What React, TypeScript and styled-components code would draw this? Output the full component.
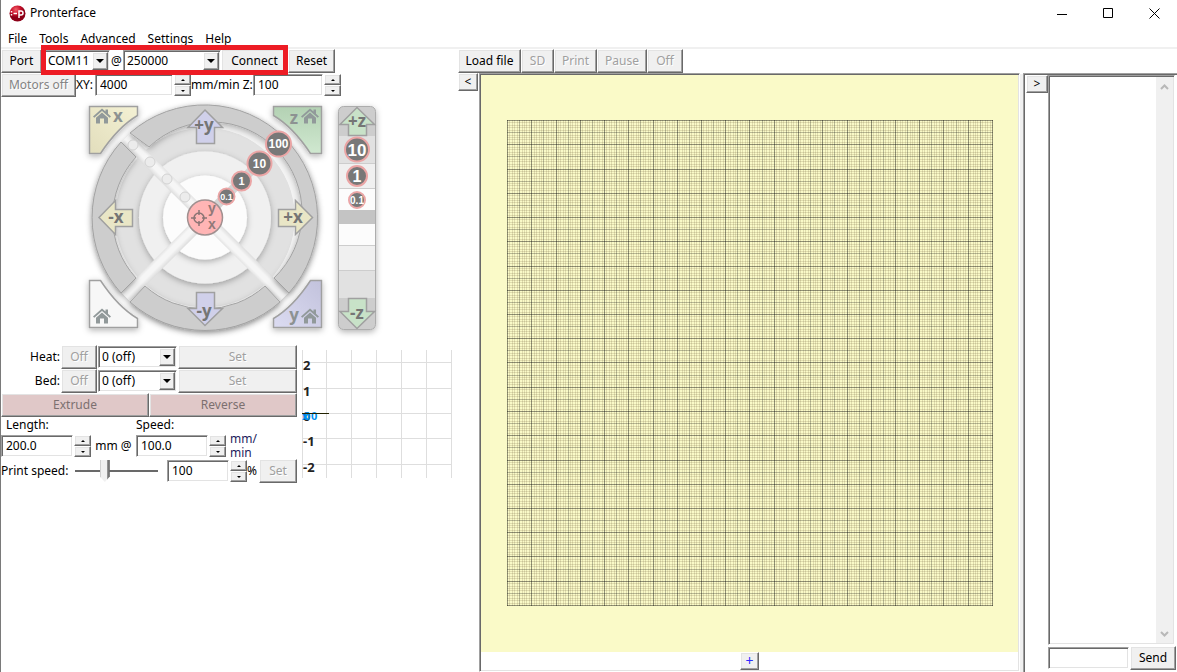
import React from "react";
import styled, { createGlobalStyle, css } from "styled-components";

const Global = createGlobalStyle`
  * { box-sizing: border-box; }
  body { margin: 0; background: #fff; }
  body, button, input, select, textarea {
    font: 12px/16px "Noto Sans", "Open Sans", sans-serif;
    color: #000;
  }
`;

const raised = css`
  background: #f0f0f0;
  border: 1px solid;
  border-color: #fff #696969 #696969 #fff;
  box-shadow: inset -1px -1px #a0a0a0, inset 1px 1px #e3e3e3;
`;

const sunken = css`
  background: #fff;
  border: 1px solid;
  border-color: #a0a0a0 #fff #fff #a0a0a0;
  box-shadow: inset 1px 1px #696969, inset -1px -1px #e3e3e3;
`;

const Window = styled.div`
  display: flex;
  flex-direction: column;
  min-height: 100vh;
  border-left: 1px solid #7a7a7a;
`;

const TitleBar = styled.header`
  display: flex;
  align-items: center;
  height: 26px;
  padding-left: 8px;
`;

const Title = styled.h1`
  flex: 1;
  margin: 0 0 0 4px;
  font-size: 12px;
  font-weight: 400;
`;

const WindowButton = styled.button`
  display: grid;
  place-items: center;
  width: 46px;
  height: 26px;
  padding: 0;
  border: 0;
  background: none;
`;

const MenuBar = styled.nav`
  display: flex;
  align-items: center;
  gap: 12px;
  height: 23px;
  padding: 4px 0 0 7px;
  border-bottom: 2px solid #f0f0f0;
`;

const MenuLink = styled.a`
  color: #000;
  text-decoration: none;
`;

const Body = styled.main`
  flex: 1;
  display: flex;
`;

const Controls = styled.section`
  flex: 0 0 457px;
`;

const Row = styled.div<{ $h: number; $gap?: number }>`
  display: flex;
  align-items: center;
  height: ${(p) => p.$h}px;
  gap: ${(p) => p.$gap ?? 0}px;
`;

const PushButton = styled.button<{ $w: number; $h?: number; $pink?: boolean }>`
  ${raised}
  flex: none;
  width: ${(p) => p.$w}px;
  height: ${(p) => p.$h ?? 24}px;
  padding: 0;
  white-space: nowrap;
  ${(p) => p.$pink && "background: #e0c8c8;"}
  &:disabled {
    color: ${(p) => (p.$pink ? "#7c7070" : "#a0a0a0")};
    text-shadow: ${(p) => (p.$pink ? "none" : "1px 1px #fff")};
  }
`;

const MotorsButton = styled(PushButton)`
  &:disabled { color: #838383; }
`;

const Highlight = styled.div`
  position: relative;
  display: flex;
  align-items: center;
  height: 24px;
  padding-left: 2px;
  &::after {
    content: "";
    position: absolute;
    inset: -4px 0 -2px -1px;
    border: 5px solid #ed1c24;
    pointer-events: none;
  }
`;

const ComboBox = styled.div<{ $w: number }>`
  ${sunken}
  display: grid;
  grid-template-columns: 1fr 16px;
  flex: none;
  width: ${(p) => p.$w}px;
  height: 22px;
  padding: 1px;
`;

const ComboSelect = styled.select`
  grid-area: 1 / 1 / 2 / 3;
  appearance: none;
  min-width: 0;
  padding: 0 0 1px 2px;
  border: 0;
  background: none;
`;

const ComboArrow = styled.span`
  ${raised}
  grid-area: 1 / 2;
  display: grid;
  place-items: center;
  pointer-events: none;
`;

const Field = styled.input<{ $w: number }>`
  ${sunken}
  flex: none;
  width: ${(p) => p.$w}px;
  height: 22px;
  padding: 0 4px 1px;
`;

const SpinBox = styled.div`
  display: flex;
  align-items: center;
  gap: 1px;
`;

const SpinButtons = styled.div`
  display: grid;
  width: 17px;
`;

const SpinButton = styled.button`
  ${raised}
  display: grid;
  place-items: center;
  height: 11px;
  padding: 0;
`;

const AxisLabel = styled.label<{ $w: number }>`
  width: ${(p) => p.$w}px;
  white-space: nowrap;
`;

const HeaterLabel = styled.label`
  width: 59px;
  text-align: right;
`;

const Unit = styled.span<{ $w: number; $center?: boolean }>`
  width: ${(p) => p.$w}px;
  white-space: nowrap;
  text-align: ${(p) => (p.$center ? "center" : "left")};
`;

const SpeedUnit = styled.span`
  width: 40px;
  padding-left: 4px;
  line-height: 14px;
  color: #1c1c5c;
`;

const Lower = styled.div`
  display: flex;
  gap: 5px;
`;

const HeaterPane = styled.div`
  width: 296px;
`;

const ExtrudeLabels = styled.div`
  display: grid;
  grid-template-columns: 130px 1fr;
  height: 16px;
  padding-left: 5px;
`;

const Slider = styled.input`
  appearance: none;
  width: 83px;
  height: 22px;
  margin: 0 9px 0 0;
  background: linear-gradient(#696969, #696969) center / 100% 2px no-repeat;
  &::-webkit-slider-thumb {
    appearance: none;
    width: 10px;
    height: 22px;
    background: linear-gradient(90deg, #d0d0d0 1px, #f0f0f0 1px, #f0f0f0 7px, #a0a0a0 7px, #696969 9px);
    clip-path: polygon(0 0, 100% 0, 100% 75%, 50% 100%, 0 75%);
  }
`;

const Plot = styled.section`
  flex: 1;
  display: flex;
  flex-direction: column;
  min-width: 0;
`;

const Viewer = styled.div`
  flex: 1;
  display: flex;
  align-items: flex-start;
`;

const ViewPanel = styled.div`
  ${sunken}
  flex: 1;
  align-self: stretch;
  display: flex;
  flex-direction: column;
  align-items: center;
  margin-left: 1px;
  padding: 1px;
`;

const Bed = styled.div`
  flex: 1;
  align-self: stretch;
  display: flex;
  justify-content: center;
  align-items: flex-start;
  padding-top: 45px;
  background: #fafac8;
`;

const AddButton = styled(PushButton)`
  color: #2b2bff;
  font-size: 14px;
  line-height: 14px;
`;

const Splitter = styled.div`
  width: 3px;
  margin-top: 25px;
  background: #f0f0f0;
`;

const LogPanel = styled.aside`
  flex: 0 0 154px;
  min-width: 0;
  display: flex;
  align-items: flex-start;
  margin-top: 24px;
  padding: 1px 2px 2px;
  border: solid #a0a0a0;
  border-width: 1px 0 0 1px;
  box-shadow: inset 1px 1px #696969;
`;

const LogColumn = styled.div`
  flex: 1;
  align-self: stretch;
  display: flex;
  flex-direction: column;
  gap: 1px;
  min-width: 0;
`;

const LogBox = styled.div`
  ${sunken}
  flex: 1;
  display: flex;
  padding: 1px;
`;

const LogText = styled.textarea`
  flex: 1;
  min-width: 0;
  border: 0;
  resize: none;
`;

const ScrollTrack = styled.div`
  display: flex;
  flex-direction: column;
  justify-content: space-between;
  align-items: center;
  width: 17px;
  padding: 6px 0 5px;
  background: #f0f0f0;
`;

const Drawing = styled.svg`
  display: block;
  flex: none;
`;

function Combo({ label, value, w }: { label: string; value: string; w: number }) {
  return (
    <ComboBox $w={w}>
      <ComboSelect aria-label={label} defaultValue={value}>
        <option>{value}</option>
      </ComboSelect>
      <ComboArrow>
        <svg width="8" height="4"><path d="M0 0H8L4 4Z" fill="#000" /></svg>
      </ComboArrow>
    </ComboBox>
  );
}

function Spin({ id, value, w }: { id: string; value: string; w: number }) {
  return (
    <SpinBox>
      <Field id={id} $w={w} defaultValue={value} />
      <SpinButtons>
        <SpinButton aria-label="Increase">
          <svg width="4" height="2"><path d="M0 2H4L2 0Z" fill="#000" /></svg>
        </SpinButton>
        <SpinButton aria-label="Decrease">
          <svg width="4" height="2"><path d="M0 0H4L2 2Z" fill="#000" /></svg>
        </SpinButton>
      </SpinButtons>
    </SpinBox>
  );
}

function Badge({ x, y, r, size, text }: { x: number; y: number; r: number; size: number; text: string }) {
  return (
    <g>
      <circle cx={x} cy={y} r={r} fill="#787878" stroke="#eba5a5" strokeWidth="2" />
      <text x={x} y={y + size * 0.36} fontSize={size} textAnchor="middle" fill="#fff" fontFamily="Liberation Sans, sans-serif" fontWeight="700">{text}</text>
    </g>
  );
}

function House({ x, y }: { x: number; y: number }) {
  return (
    <g transform={`translate(${x} ${y})`} fill="#91999a">
      <path d="M0 8.5 9 0.5 12.5 3.5V1.500H15V5.800L18 8.500 16.700 9.800 9 3 1.300 9.800Z" />
      <path d="M3 9.800 9 4.500 15 9.800V15.500H11V10.500H7V15.500H3Z" />
    </g>
  );
}

/* Outer ring pieces, cut where the NW, SW and SE channels pass. */
const RING_SEGMENTS = [
  "M130 133A113 113 0 0 1 289 293L274 278A90 90 0 0 0 149 147Z",
  "M121 142A113 113 0 0 0 121 293L136 278A90 90 0 0 1 136 157Z",
  "M130 302A113 113 0 0 0 280 302L265 286A90 90 0 0 1 145 286Z",
];

function JogPanel() {
  return (
    <Drawing width="457" height="248" viewBox="1 97 457 248" role="img" aria-label="Jog controls">
      <defs>
        <filter id="shadow" x="-20%" y="-20%" width="140%" height="150%">
          <feDropShadow dx="0" dy="2" stdDeviation="3" floodColor="#000" floodOpacity="0.3" />
        </filter>
        <linearGradient id="channel" gradientUnits="userSpaceOnUse" x1="0" y1="-7" x2="0" y2="7">
          <stop offset="0" stopColor="#d8d8d8" />
          <stop offset="0.4" stopColor="#f6f6f6" />
          <stop offset="0.7" stopColor="#f6f6f6" />
          <stop offset="1" stopColor="#dedede" />
        </linearGradient>
        <linearGradient id="yellow" x1="1" y1="0" x2="0" y2="1"><stop stopColor="#f4f1d4" /><stop offset="1" stopColor="#e2debc" /></linearGradient>
        <linearGradient id="green" x1="0" y1="0" x2="0" y2="1"><stop stopColor="#b3d1b3" /><stop offset="1" stopColor="#d0e8d0" /></linearGradient>
        <linearGradient id="blue" x1="0" y1="1" x2="1" y2="0"><stop stopColor="#dcdcf2" /><stop offset="1" stopColor="#c2c2dc" /></linearGradient>
        <clipPath id="disc"><circle cx="205" cy="217.500" r="90" /></clipPath>
      </defs>

      <circle cx="205" cy="217.500" r="112" fill="#f4f4f4" filter="url(#shadow)" />
      <g clipPath="url(#disc)">
        <circle cx="205" cy="217.500" r="90" fill="#e1e1e1" />
        <g filter="url(#shadow)"><circle cx="205" cy="217.500" r="66" fill="#f0f0f0" /></g>
        <g filter="url(#shadow)"><circle cx="205" cy="217.500" r="42" fill="#fcfcfc" /></g>
      </g>
      {[45, 135, 225].map((a) => (
        <rect key={a} x="14" y="-6" width="98" height="12" fill="url(#channel)" transform={`translate(205 217.500) rotate(${a})`} />
      ))}
      <path d="M215 207 274 148" stroke="#d4d4d4" strokeWidth="9" />
      <g filter="url(#shadow)">
        {RING_SEGMENTS.map((d) => <path key={d} d={d} fill="#cdcdcd" stroke="#a3a3a3" />)}
      </g>
      {[[133, 145], [150, 162], [167, 179], [185, 197]].map(([x, y]) => (
        <circle key={x} cx={x} cy={y} r="5" fill="#ececec" stroke="#d2d2d2" />
      ))}
      <path d="M267 156 272 151" stroke="#eee" strokeWidth="10" />

      <g stroke="#a0a0a0" strokeWidth="1.500" filter="url(#shadow)">
        <path d="M89.500 106.500H137.500V115.500Q118 127 100.500 153.500H89.500Z" fill="url(#yellow)" />
        <path d="M321.500 106.500H273.500V115.500Q293 127 310.500 153.500H321.500Z" fill="url(#green)" />
        <path d="M89.500 327.500H137.500V318.500Q118 307 100.500 280.500H89.500Z" fill="#f7f7f7" />
        <path d="M321.500 327.500H273.500V318.500Q293 307 310.500 280.500H321.500Z" fill="url(#blue)" />
      </g>
      <House x={93} y={108} />
      <House x={301} y={108} />
      <House x={93} y={308} />
      <House x={301} y={308} />

      <g stroke="#a0a0a0" strokeWidth="1.500">
        <path d="M205 110 222.500 127.500H214.500V143.500H196.500V127.500H188Z" fill="#d0d0ea" />
        <path d="M205 325.500 222.500 308.500H214.500V292.500H196.500V308.500H188Z" fill="#d0d0ea" />
        <path d="M99 217.500 115.500 200.500V209.500H132.500V226.500H115.500V234.500Z" fill="#e9e6c6" />
        <path d="M312.500 217.500 295.500 200.500V209.500H278.500V226.500H295.500V234.500Z" fill="#e9e6c6" />
      </g>

      <circle cx="205" cy="217.500" r="17.500" fill="#ffb5b5" stroke="#a09090" strokeWidth="1.500" />
      <g fill="none" stroke="#8a7474" strokeWidth="1.500">
        <circle cx="199" cy="218" r="5" />
        <path d="M199 210V215M199 221V226M191 218H196M202 218H207" />
      </g>

      <g filter="url(#shadow)">
        <rect x="338.500" y="106.500" width="37" height="223" rx="5" fill="#cdcdcd" stroke="#adadad" />
      </g>
      <g>
        <rect x="339" y="136" width="36" height="27" fill="#e1e1e1" />
        <rect x="339" y="164" width="36" height="24" fill="#f0f0f0" />
        <rect x="339" y="189" width="36" height="21" fill="#fcfcfc" />
        <rect x="339" y="210" width="36" height="14" fill="#c4c4c4" />
        <rect x="339" y="224" width="36" height="21" fill="#fcfcfc" />
        <rect x="339" y="246" width="36" height="24" fill="#f0f0f0" />
        <rect x="339" y="271" width="36" height="27" fill="#e1e1e1" />
      </g>
      <g fill="#c8e2c8" stroke="#a0a0a0" strokeWidth="1.500">
        <path d="M357 107.500 374.500 124.500H366.500V135.500H348.500V124.500H340Z" />
        <path d="M357 328.500 374.500 311.500H366.500V298.500H348.500V311.500H340Z" />
      </g>

      <g fontFamily="Open Sans, sans-serif" fontWeight="700" fontSize="17" fill="#757575" textAnchor="middle">
        <text x="204" y="131">+y</text>
        <text x="204" y="317">-y</text>
        <text x="116" y="223">-x</text>
        <text x="293" y="223">+x</text>
        <text x="357" y="127">+z</text>
        <text x="357" y="319">-z</text>
        <g fill="#8d9292">
          <text x="118" y="122">x</text>
          <text x="294" y="124">z</text>
          <text x="294" y="321">y</text>
        </g>
        <g fill="#917878" fontSize="14" fontFamily="Liberation Sans, sans-serif">
          <text x="212" y="213">y</text>
          <text x="212" y="229">x</text>
        </g>
      </g>

      <Badge x={278.5} y={144} r={12.5} size={12} text="100" />
      <Badge x={259.5} y={163.5} r={12} size={12} text="10" />
      <Badge x={241.5} y={181} r={9.5} size={11} text="1" />
      <Badge x={226.5} y={196.5} r={8} size={9} text="0.1" />
      <Badge x={357} y={149.5} r={12} size={17} text="10" />
      <Badge x={357} y={176} r={10} size={16} text="1" />
      <Badge x={357} y={200} r={8} size={10} text="0.1" />
    </Drawing>
  );
}

function TemperatureGraph() {
  return (
    <Drawing width="151" height="134" viewBox="302 345 151 134" role="img" aria-label="Temperature graph">
      <g stroke="#dedede">
        {[302, 326, 351, 376, 401, 426, 451].map((x) => <path key={x} d={`M${x + 0.5} 350V478`} />)}
        {[362, 388, 413, 438, 464].map((y) => <path key={y} d={`M302 ${y + 0.5}H452`} />)}
      </g>
      <g fontFamily="Noto Sans, sans-serif" fontWeight="700" fontSize="13" fill="#222">
        <text x="303" y="370">2</text>
        <text x="303" y="396">1</text>
        <text x="303" y="421">0</text>
        <text x="303" y="446">-1</text>
        <text x="303" y="472">-2</text>
      </g>
      <g fontFamily="Noto Sans, sans-serif" fontWeight="700" fontSize="11" fill="#0090f0">
        <text x="302" y="420">x</text>
        <text x="304" y="420">0</text>
        <text x="311" y="420">0</text>
      </g>
      <path d="M302 413.500H329" stroke="#222200" />
    </Drawing>
  );
}

const MM = 2.425;
const TICKS = Array.from({ length: 201 }, (_, i) => i);

function tickLines(test: (i: number) => boolean) {
  return TICKS.filter(test)
    .map((i) => {
      const p = Math.round(i * MM) + 0.5;
      return `M${p} 0V486M0 ${p}H486`;
    })
    .join("");
}

function BedGrid() {
  return (
    <Drawing width="486" height="486" role="img" aria-label="Print bed">
      <path d={tickLines((i) => i % 5 !== 0)} stroke="#320" strokeOpacity="0.13" />
      <path d={tickLines((i) => i % 10 === 5)} stroke="#000" strokeOpacity="0.26" />
      <path d={tickLines((i) => i % 10 === 0)} stroke="#000" strokeOpacity="0.42" />
    </Drawing>
  );
}

export default function App() {
  return (
    <Window>
      <Global />
      <TitleBar>
        <svg width="17" height="17" viewBox="0 0 17 17">
          <defs>
            <radialGradient id="logo" cx="0.4" cy="0.25"><stop stopColor="#f0606a" /><stop offset="0.6" stopColor="#c8102a" /><stop offset="1" stopColor="#8c0018" /></radialGradient>
          </defs>
          <circle cx="8.500" cy="8.500" r="8" fill="url(#logo)" />
          <g fill="none" stroke="#fff" strokeWidth="1.500">
            <path d="M2.500 6V7.500M2.500 9V10.500M4.500 8.500H8M10 13V6H12Q14 6 14 8T12 10H10" />
          </g>
        </svg>
        <Title>Pronterface</Title>
        <WindowButton aria-label="Minimize"><svg width="10" height="11"><path d="M0 6.500H10" stroke="#000" /></svg></WindowButton>
        <WindowButton aria-label="Maximize"><svg width="10" height="10"><path d="M.5.5H9.500V9.500H.5Z" fill="none" stroke="#000" /></svg></WindowButton>
        <WindowButton aria-label="Close"><svg width="11" height="11"><path d="M.5.5 10.500 10.500M10.500.5.5 10.500" stroke="#000" /></svg></WindowButton>
      </TitleBar>
      <MenuBar>
        {["File", "Tools", "Advanced", "Settings", "Help"].map((m) => (
          <MenuLink key={m} href="#">{m}</MenuLink>
        ))}
      </MenuBar>
      <Body>
        <Controls>
          <Row $h={24}>
            <PushButton $w={41}>Port</PushButton>
            <Highlight>
              <Combo label="Port name" value="COM11" w={66} />
              <Unit $w={13} $center>@</Unit>
              <Combo label="Baud rate" value="250000" w={98} />
              <PushButton $w={67}>Connect</PushButton>
            </Highlight>
            <PushButton $w={47}>Reset</PushButton>
          </Row>
          <Row $h={24}>
            <MotorsButton $w={75} disabled>Motors off</MotorsButton>
            <AxisLabel $w={19} htmlFor="xy">XY:</AxisLabel>
            <Spin id="xy" value="4000" w={78} />
            <AxisLabel $w={62} htmlFor="z">mm/min Z:</AxisLabel>
            <Spin id="z" value="100" w={70} />
          </Row>
          <JogPanel />
          <Lower>
            <HeaterPane>
              <Row $h={24} $gap={1}>
                <HeaterLabel>Heat:</HeaterLabel>
                <PushButton $w={36} disabled>Off</PushButton>
                <Combo label="Heater temperature" value="0 (off)" w={79} />
                <PushButton $w={119} disabled>Set</PushButton>
              </Row>
              <Row $h={24} $gap={1}>
                <HeaterLabel>Bed:</HeaterLabel>
                <PushButton $w={36} disabled>Off</PushButton>
                <Combo label="Bed temperature" value="0 (off)" w={79} />
                <PushButton $w={119} disabled>Set</PushButton>
              </Row>
              <Row $h={24}>
                <PushButton $w={148} $pink disabled>Extrude</PushButton>
                <PushButton $w={148} $pink disabled>Reverse</PushButton>
              </Row>
              <ExtrudeLabels>
                <label htmlFor="length">Length:</label>
                <label htmlFor="speed">Speed:</label>
              </ExtrudeLabels>
              <Row $h={26}>
                <Spin id="length" value="200.0" w={72} />
                <Unit $w={45} $center>mm @</Unit>
                <Spin id="speed" value="100.0" w={72} />
                <SpeedUnit>mm/ min</SpeedUnit>
              </Row>
              <Row $h={24}>
                <AxisLabel $w={74} htmlFor="print-speed">Print speed:</AxisLabel>
                <Slider id="print-speed" type="range" min={0} max={300} defaultValue={102} />
                <Spin id="print-percent" value="100" w={62} />
                <Unit $w={12}>%</Unit>
                <PushButton $w={38} disabled>Set</PushButton>
              </Row>
            </HeaterPane>
            <TemperatureGraph />
          </Lower>
        </Controls>
        <Plot>
          <Row $h={24}>
            <PushButton $w={63}>Load file</PushButton>
            <PushButton $w={33} disabled>SD</PushButton>
            <PushButton $w={43} disabled>Print</PushButton>
            <PushButton $w={50} disabled>Pause</PushButton>
            <PushButton $w={36} disabled>Off</PushButton>
          </Row>
          <Viewer>
            <PushButton $w={20} $h={18}>&lt;</PushButton>
            <ViewPanel>
              <Bed><BedGrid /></Bed>
              <AddButton $w={19} $h={18}>+</AddButton>
            </ViewPanel>
          </Viewer>
        </Plot>
        <Splitter />
        <LogPanel>
          <PushButton $w={22} $h={18}>&gt;</PushButton>
          <LogColumn>
            <LogBox>
              <LogText aria-label="Printer log" cols={1} readOnly />
              <ScrollTrack>
                <svg width="9" height="7"><path d="M1 6 4.500 2.500 8 6" fill="none" stroke="#b8b8b8" strokeWidth="2" /></svg>
                <svg width="9" height="7"><path d="M1 1 4.500 4.500 8 1" fill="none" stroke="#b8b8b8" strokeWidth="2" /></svg>
              </ScrollTrack>
            </LogBox>
            <Row $h={24} $gap={1}>
              <Field aria-label="Command" $w={81} />
              <PushButton $w={46}>Send</PushButton>
            </Row>
          </LogColumn>
        </LogPanel>
      </Body>
    </Window>
  );
}
